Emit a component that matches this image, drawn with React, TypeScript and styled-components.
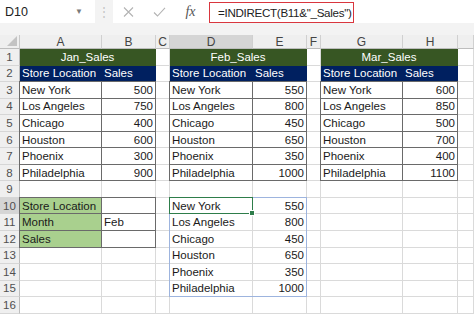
import React from 'react';
import styled, { createGlobalStyle, css } from 'styled-components';

const Global = createGlobalStyle`
  html, body { margin: 0; padding: 0; background: #ffffff; }
  body { width: 474px; height: 314px; overflow: hidden; font-family: "Liberation Sans", Arial, sans-serif; }
`;

const Page = styled.div`
  width: 474px;
  height: 314px;
  overflow: hidden;
  display: flex;
  flex-direction: column;
  background: #ffffff;
`;

const TopArea = styled.div`
  flex: none;
  background: #f3f3f3;
  padding-bottom: 12px;
`;

const FormulaBar = styled.div`
  display: flex;
  height: 23px;
`;

const NameBox = styled.div`
  width: 95px;
  box-sizing: border-box;
  background: #ffffff;
  display: flex;
  align-items: center;
  justify-content: space-between;
  padding: 0 12px 0 5px;
  font-size: 12.5px;
  color: #222222;
`;

const Caret = styled.span`
  font-size: 8px;
  color: #7a7a7a;
`;

const Grip = styled.div`
  width: 18px;
  display: flex;
  align-items: center;
  justify-content: center;
  color: #c4c4c4;
  font-size: 12px;
`;

const FormulaArea = styled.div`
  flex: 1;
  background: #ffffff;
  display: flex;
  align-items: stretch;
`;

const IconSlot = styled.div`
  width: 31px;
  display: flex;
  align-items: center;
  justify-content: center;
`;

const Fx = styled.span`
  font-family: "Liberation Serif", serif;
  font-style: italic;
  font-size: 14px;
  color: #555555;
`;

const FormulaBox = styled.div`
  margin: 2px 0 0 3px;
  width: 145px;
  box-sizing: border-box;
  border: 1.5px solid #d9363e;
  display: flex;
  align-items: center;
  padding-left: 8px;
  font-size: 11.6px;
  letter-spacing: -0.3px;
  color: #222222;
  white-space: nowrap;
`;

const Sheet = styled.div`
  flex: 1;
  display: grid;
  grid-template-columns: 20px 82px 54px 14px 83px 54px 14px 82px 55px 1fr;
  grid-template-rows: 14px repeat(16, 16.55px);
  overflow: hidden;
`;

type Pos = { $row: number; $col: number; $span?: number; $rowSpan?: number };

const placed = css<Pos>`
  grid-row: ${(p) => p.$row} / span ${(p) => p.$rowSpan ?? 1};
  grid-column: ${(p) => p.$col} / span ${(p) => p.$span ?? 1};
`;

const Corner = styled.div<Pos>`
  ${placed};
  background: #efefef;
  border-right: 1px solid #c8c8c8;
  border-bottom: 1px solid #bdbdbd;
  display: flex;
  align-items: flex-end;
  justify-content: flex-end;
  padding: 0 2px 2px 0;
`;

const ColHeader = styled.div<Pos & { $active?: boolean }>`
  ${placed};
  background: ${(p) => (p.$active ? '#d5d5d5' : '#efefef')};
  border-right: 1px solid #d0d0d0;
  border-bottom: 1px solid #bdbdbd;
  display: flex;
  align-items: center;
  justify-content: center;
  font-size: 12px;
  color: #444444;
  overflow: hidden;
`;

const RowHeader = styled.div<Pos & { $active?: boolean }>`
  ${placed};
  background: ${(p) => (p.$active ? '#d5d5d5' : '#efefef')};
  border-right: 1px solid #bdbdbd;
  border-bottom: 1px solid #d6d6d6;
  display: flex;
  align-items: center;
  justify-content: center;
  font-size: 11.5px;
  color: #505050;
`;

const Cell = styled.div<
  Pos & { $fill?: string; $ink?: string; $align?: 'left' | 'right' | 'center'; $boxed?: boolean }
>`
  ${placed};
  position: relative;
  box-sizing: border-box;
  background: ${(p) => p.$fill ?? '#ffffff'};
  border-right: 1px solid ${(p) => p.$fill ?? '#dadada'};
  border-bottom: 1px solid ${(p) => p.$fill ?? '#dadada'};
  display: flex;
  align-items: center;
  justify-content: ${(p) =>
    p.$align === 'right' ? 'flex-end' : p.$align === 'center' ? 'center' : 'flex-start'};
  padding: 0 2px;
  font-size: 11.5px;
  color: ${(p) => p.$ink ?? '#1a1a1a'};
  white-space: nowrap;
  overflow: visible;
  ${(p) =>
    p.$boxed &&
    css`
      &::after {
        content: '';
        position: absolute;
        top: -1px;
        left: -1px;
        right: -1px;
        bottom: -1px;
        border: 1px solid #6a6a6a;
        pointer-events: none;
        z-index: 1;
      }
    `}
`;

const RangeFrame = styled.div<Pos>`
  ${placed};
  margin: -1px 0 0 -1px;
  border: 1px solid #9db4de;
  pointer-events: none;
  z-index: 2;
`;

const ActiveFrame = styled.div<Pos>`
  ${placed};
  position: relative;
  margin: -1px 0 0 -1px;
  border: 1px solid #2e7d4a;
  pointer-events: none;
  z-index: 3;
`;

const FillHandle = styled.span`
  position: absolute;
  right: -3px;
  bottom: -3px;
  width: 4px;
  height: 4px;
  background: #2e7d4a;
  border: 1px solid #ffffff;
`;

const GREEN = '#375623';
const NAVY = '#002060';
const LIGHT_GREEN = '#a9d08e';

const cities = ['New York', 'Los Angeles', 'Chicago', 'Houston', 'Phoenix', 'Philadelphia'];
const tables = [
  { title: 'Jan_Sales', col: 2, values: [500, 750, 400, 600, 300, 900] },
  { title: 'Feb_Sales', col: 5, values: [550, 800, 450, 650, 350, 1000] },
  { title: 'Mar_Sales', col: 8, values: [600, 850, 500, 700, 400, 1100] },
];
const letters = ['A', 'B', 'C', 'D', 'E', 'F', 'G', 'H', ''];
const lookupLabels = ['Store Location', 'Month', 'Sales'];
const lookupValues = ['', 'Feb', ''];
const febValues = tables[1].values;

export default function App() {
  const cells: React.ReactNode[] = [];
  const filled = new Set<string>();
  const mark = (r: number, c: number) => filled.add(`${r}-${c}`);

  tables.forEach((t) => {
    cells.push(
      <Cell key={`t-${t.col}`} $row={2} $col={t.col} $span={2} $fill={GREEN} $ink="#ffffff" $align="center">
        {t.title}
      </Cell>
    );
    mark(2, t.col);
    mark(2, t.col + 1);
    cells.push(
      <Cell key={`h1-${t.col}`} $row={3} $col={t.col} $fill={NAVY} $ink="#ffffff">
        Store Location
      </Cell>,
      <Cell key={`h2-${t.col}`} $row={3} $col={t.col + 1} $fill={NAVY} $ink="#ffffff">
        Sales
      </Cell>
    );
    mark(3, t.col);
    mark(3, t.col + 1);
    cities.forEach((city, i) => {
      const r = 4 + i;
      cells.push(
        <Cell key={`c-${t.col}-${i}`} $row={r} $col={t.col} $boxed>
          {city}
        </Cell>,
        <Cell key={`v-${t.col}-${i}`} $row={r} $col={t.col + 1} $align="right" $boxed>
          {t.values[i]}
        </Cell>
      );
      mark(r, t.col);
      mark(r, t.col + 1);
    });
  });

  lookupLabels.forEach((label, i) => {
    const r = 11 + i;
    cells.push(
      <Cell key={`l-${i}`} $row={r} $col={2} $fill={LIGHT_GREEN} $boxed>
        {label}
      </Cell>,
      <Cell key={`lv-${i}`} $row={r} $col={3} $boxed>
        {lookupValues[i]}
      </Cell>
    );
    mark(r, 2);
    mark(r, 3);
  });

  cities.forEach((city, i) => {
    const r = 11 + i;
    cells.push(
      <Cell key={`s-${i}`} $row={r} $col={5}>
        {city}
      </Cell>,
      <Cell key={`sv-${i}`} $row={r} $col={6} $align="right">
        {febValues[i]}
      </Cell>
    );
    mark(r, 5);
    mark(r, 6);
  });

  for (let r = 2; r <= 17; r++) {
    for (let c = 2; c <= 10; c++) {
      if (!filled.has(`${r}-${c}`)) {
        cells.push(<Cell key={`e-${r}-${c}`} $row={r} $col={c} />);
      }
    }
  }

  return (
    <Page>
      <Global />
      <TopArea>
        <FormulaBar>
          <NameBox>
            <span>D10</span>
            <Caret>▼</Caret>
          </NameBox>
          <Grip>⋮</Grip>
          <FormulaArea>
            <IconSlot>
              <svg width="11" height="10" viewBox="0 0 11 10">
                <path d="M1 0.5 L10 9.5 M10 0.5 L1 9.5" stroke="#b3b3b3" strokeWidth="1.1" fill="none" />
              </svg>
            </IconSlot>
            <IconSlot>
              <svg width="13" height="10" viewBox="0 0 13 10">
                <path d="M1 5.5 L4.5 9 L12 0.8" stroke="#b3b3b3" strokeWidth="1.1" fill="none" />
              </svg>
            </IconSlot>
            <IconSlot>
              <Fx>fx</Fx>
            </IconSlot>
            <FormulaBox>=INDIRECT(B11&amp;"_Sales")</FormulaBox>
          </FormulaArea>
        </FormulaBar>
      </TopArea>
      <Sheet>
        <Corner $row={1} $col={1}>
          <svg width="10" height="10" viewBox="0 0 10 10">
            <path d="M10 0 L10 10 L0 10 Z" fill="#c3c3c3" />
          </svg>
        </Corner>
        {letters.map((l, i) => (
          <ColHeader key={`ch-${i}`} $row={1} $col={i + 2} $active={l === 'D'}>
            {l}
          </ColHeader>
        ))}
        {Array.from({ length: 16 }, (_, i) => (
          <RowHeader key={`rh-${i}`} $row={i + 2} $col={1} $active={i + 1 === 10}>
            {i + 1}
          </RowHeader>
        ))}
        {cells}
        <RangeFrame $row={11} $col={5} $span={2} $rowSpan={6} />
        <ActiveFrame $row={11} $col={5}>
          <FillHandle />
        </ActiveFrame>
      </Sheet>
    </Page>
  );
}
